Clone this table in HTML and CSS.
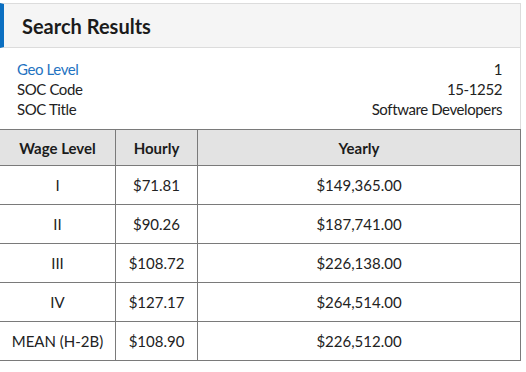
FILE: index.html
```html
<!DOCTYPE html>
<html>
<head>
<meta charset="utf-8">
<link rel="stylesheet" href="styles.css">
</head>
<body>
<div class="panel">
  <div class="panel-header">
    <h2 class="panel-title">Search Results</h2>
  </div>
  <div class="info">
    <div class="info-row"><span class="label link">Geo Level</span><span class="value">1</span></div>
    <div class="info-row"><span class="label">SOC Code</span><span class="value">15-1252</span></div>
    <div class="info-row"><span class="label">SOC Title</span><span class="value">Software Developers</span></div>
  </div>
  <table class="wages">
    <thead>
      <tr><th class="c1">Wage Level</th><th class="c2">Hourly</th><th class="c3">Yearly</th></tr>
    </thead>
    <tbody>
      <tr><td>I</td><td>$71.81</td><td>$149,365.00</td></tr>
      <tr><td>II</td><td>$90.26</td><td>$187,741.00</td></tr>
      <tr><td>III</td><td>$108.72</td><td>$226,138.00</td></tr>
      <tr><td>IV</td><td>$127.17</td><td>$264,514.00</td></tr>
      <tr><td>MEAN (H-2B)</td><td>$108.90</td><td>$226,512.00</td></tr>
    </tbody>
  </table>
</div>
</body>
</html>
```

FILE: styles.css
```css
html, body {
  margin: 0;
  padding: 0;
  background: #ffffff;
}
body {
  font-family: Lato, "Liberation Sans", sans-serif;
  color: #222222;
  font-size: 15px;
}
.panel {
  width: 521px;
  padding-top: 3px;
}
.panel-header {
  box-sizing: border-box;
  height: 45px;
  background: #f5f5f5;
  border: 1px solid #dcdcdc;
  border-left: 4px solid #0b6fc1;
  display: flex;
  align-items: center;
  padding-left: 18px;
}
.panel-title {
  margin: 0;
  font-size: 20px;
  font-weight: 700;
  color: #1b1b1b;
}
.info {
  border-right: 1px solid #dcdcdc;
  padding: 11px 18px 10px 17px;
  letter-spacing: -0.4px;
}
.info-row {
  display: flex;
  justify-content: space-between;
  line-height: 20px;
  height: 20px;
}
.link {
  color: #1f73c1;
}
.wages {
  width: 521px;
  border-collapse: collapse;
  table-layout: fixed;
}
.wages th, .wages td {
  border: 1px solid #7a7a7a;
  text-align: center;
  padding: 0;
  font-size: 15px;
}
.wages tr > :first-child {
  border-left: none;
}
.wages th {
  background: #e3e3e3;
  font-weight: 700;
  height: 35px;
  color: #1b1b1b;
}
.wages td {
  height: 38px;
}
.c1 { width: 115px; }
.c2 { width: 81px; }
```
